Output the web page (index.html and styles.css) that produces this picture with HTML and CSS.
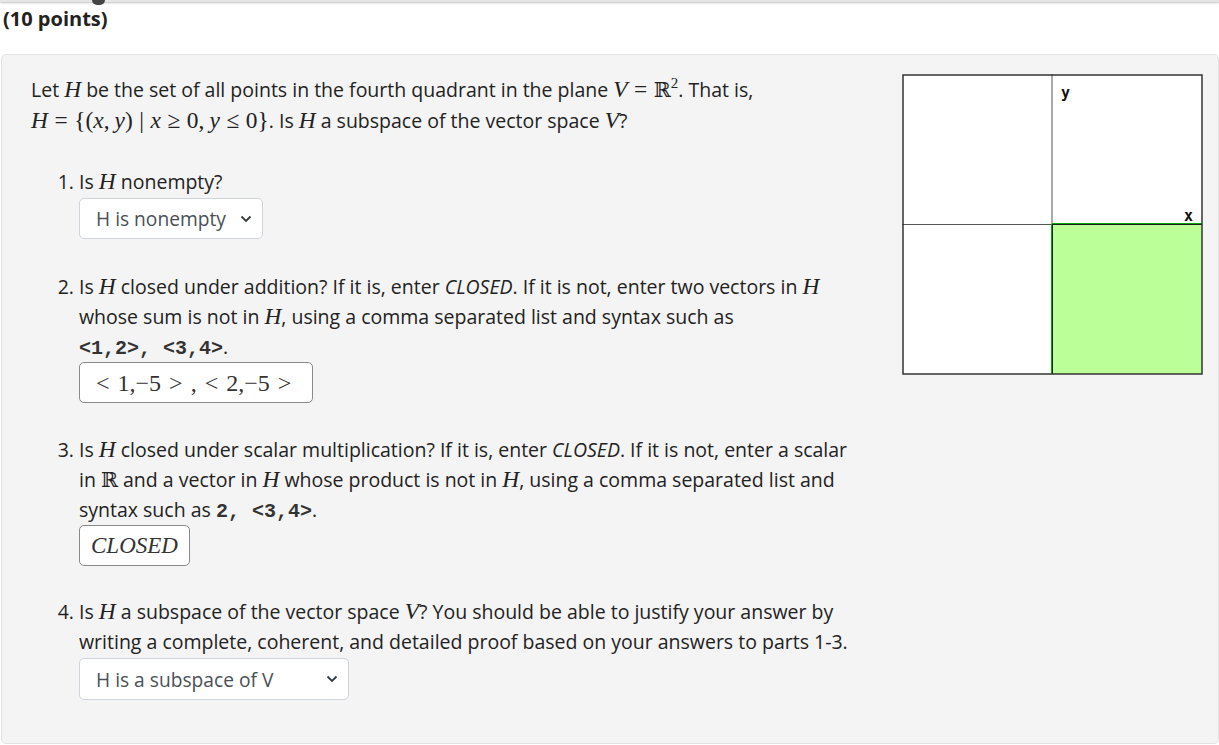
FILE: index.html
```html
<!DOCTYPE html>
<html>
<head>
<meta charset="utf-8">
<link rel="stylesheet" href="styles.css">
</head>
<body>
<div class="topbar"><span class="clip-glyph"></span></div>
<h3 class="points">(10 points)</h3>
<div class="panel">
  <div class="question">
    <p class="intro">Let <i class="m">H</i> be the set of all points in the fourth quadrant in the plane <i class="m">V</i><span class="mr rel">=</span><span class="mr bb">ℝ</span><sup class="mr">2</sup>. That is,<br><i class="m">H</i><span class="mr rel">=</span><span class="mr">{(</span><i class="m">x</i><span class="mr">,</span> <i class="m">y</i><span class="mr">)</span><span class="mr rel">|</span><i class="m">x</i><span class="mr rel">≥</span><span class="mr">0,</span> <i class="m">y</i><span class="mr rel">≤</span><span class="mr">0}</span>. Is <i class="m">H</i> a subspace of the vector space <i class="m">V</i>?</p>
    <ol class="parts">
      <li class="part p1">
        <div class="line">Is <i class="m">H</i> nonempty?</div>
        <div class="select sel1"><span>H is nonempty</span><svg class="chev" width="12" height="8" viewBox="0 0 12 8"><path d="M1.5 1.5 L6 6 L10.5 1.5" fill="none" stroke="#343a40" stroke-width="1.8"/></svg></div>
      </li>
      <li class="part p2">
        <div class="line">Is <i class="m">H</i> closed under addition? If it is, enter <i>CLOSED</i>. If it is not, enter two vectors in <i class="m">H</i><br>whose sum is not in <i class="m">H</i>, using a comma separated list and syntax such as<br><code>&lt;1,2&gt;, &lt;3,4&gt;</code>.</div>
        <div class="answer ans2"><span class="mr">&lt;</span><span class="mr">1,−5</span><span class="mr">&gt;</span><span class="mr">,</span><span class="mr">&lt;</span><span class="mr">2,−5</span><span class="mr">&gt;</span></div>
      </li>
      <li class="part p3">
        <div class="line">Is <i class="m">H</i> closed under scalar multiplication? If it is, enter <i>CLOSED</i>. If it is not, enter a scalar<br>in <span class="mr bb">ℝ</span> and a vector in <i class="m">H</i> whose product is not in <i class="m">H</i>, using a comma separated list and<br>syntax such as <code>2, &lt;3,4&gt;</code>.</div>
        <div class="answer ans3"><i class="m">CLOSED</i></div>
      </li>
      <li class="part p4">
        <div class="line">Is <i class="m">H</i> a subspace of the vector space <i class="m">V</i>? You should be able to justify your answer by<br>writing a complete, coherent, and detailed proof based on your answers to parts 1-3.</div>
        <div class="select sel4"><span>H is a subspace of V</span><svg class="chev" width="12" height="8" viewBox="0 0 12 8"><path d="M1.5 1.5 L6 6 L10.5 1.5" fill="none" stroke="#343a40" stroke-width="1.8"/></svg></div>
      </li>
    </ol>
  </div>
  <div class="graph">
    <svg width="301" height="301" viewBox="0 0 301 301">
      <rect x="0.5" y="0.5" width="300" height="300" fill="#fff"/>
      <rect x="150" y="150" width="150" height="150" fill="#bbff99"/>
      <line x1="150" y1="0" x2="150" y2="150" stroke="#555" stroke-width="1"/>
      <line x1="0" y1="150.5" x2="150" y2="150.5" stroke="#555" stroke-width="1"/>
      <line x1="150" y1="149.5" x2="300" y2="149.5" stroke="#00aa00" stroke-width="1"/>
      <line x1="150" y1="150.5" x2="300" y2="150.5" stroke="#222" stroke-width="1"/>
      <line x1="149.5" y1="150" x2="149.5" y2="300" stroke="#00aa00" stroke-width="1"/>
      <line x1="150.5" y1="150" x2="150.5" y2="300" stroke="#222" stroke-width="1"/>
      <rect x="1" y="1" width="299" height="299" fill="none" stroke="#333" stroke-width="1.5"/>
      <text x="159" y="24" class="axis-label">y</text>
      <text x="282" y="147" class="axis-label">x</text>
    </svg>
  </div>
</div>
</body>
</html>
```
FILE: styles.css
```css
html, body {
  margin: 0;
  padding: 0;
  background: #fff;
}
body {
  font-family: "Open Sans", "Noto Sans", sans-serif;
  color: #222;
  width: 1219px;
  height: 745px;
  overflow: hidden;
}
.topbar {
  height: 2px;
  background: #e6e6e6;
  box-shadow: 0 1px 2px rgba(0,0,0,0.25);
  position: relative;
}
.clip-glyph {
  position: absolute;
  left: 92px;
  top: 0;
  width: 13px;
  height: 5px;
  background: #444;
  border-radius: 0 0 7px 7px;
}
.points {
  margin: 4px 0 0 3px;
  font-size: 20px;
  font-weight: 700;
  line-height: 26px;
  color: #222;
}
.panel {
  margin: 22px 0 0 1px;
  height: 690px;
  box-sizing: border-box;
  background: #f4f4f4;
  border: 1px solid #e2e2e2;
  border-radius: 5px;
  padding: 19px 0 0 29px;
  display: flex;
  justify-content: space-between;
}
.question {
  font-size: 19.5px;
  line-height: 31px;
}
.intro {
  margin: 0;
  white-space: nowrap;
}
.intro *, .line * {
  line-height: 0;
}
.m {
  font-family: "Liberation Serif", "DejaVu Serif", serif;
  font-style: italic;
  font-size: 1.2em;
}
.mr {
  font-family: "Liberation Serif", "DejaVu Serif", serif;
  font-style: normal;
  font-size: 1.2em;
}
.rel {
  padding: 0 0.28em;
}
.bb {
  font-family: "DejaVu Serif", serif;
  font-size: 1.05em;
}
sup.mr {
  font-size: 15px;
  vertical-align: 9px;
}
.parts {
  margin: 30px 0 0 0;
  padding: 0 0 0 48px;
}
.part {
  white-space: nowrap;
}
.p1 { margin-bottom: 32px; }
.p2 { margin-bottom: 31px; }
.p3 { margin-bottom: 30px; }
.line {
  line-height: 30px;
}
code {
  font-family: "Liberation Mono", "DejaVu Sans Mono", monospace;
  font-size: 20px;
  font-weight: 700;
  color: #333;
}
.select {
  display: flex;
  align-items: center;
  justify-content: space-between;
  height: 41px;
  box-sizing: border-box;
  background: #fff;
  border: 1px solid #cfd4da;
  border-radius: 5px;
  padding: 0 10px 0 16px;
  color: #495057;
  font-size: 19.2px;
}
.sel1 { width: 184px; margin-top: 1px; }
.sel4 { width: 270px; height: 42px; margin-top: 1px; }
.answer {
  display: flex;
  align-items: center;
  height: 41px;
  box-sizing: border-box;
  background: #fff;
  border: 1px solid #8a8a8a;
  border-radius: 5px;
  padding: 0 0 0 16px;
  gap: 8px;
}
.ans2 { width: 234px; }
.ans2 .mr { font-size: 24px; color: #333; line-height: 1; }
.ans3 { width: 111px; padding-left: 11px; }
.ans3 .m { font-size: 23px; color: #333; line-height: 1; }
.graph {
  margin-right: 15px;
}
.graph svg { display: block; }
.axis-label {
  font-family: "DejaVu Sans Mono", monospace;
  font-weight: 700;
  font-size: 15px;
  fill: #111;
}
```
